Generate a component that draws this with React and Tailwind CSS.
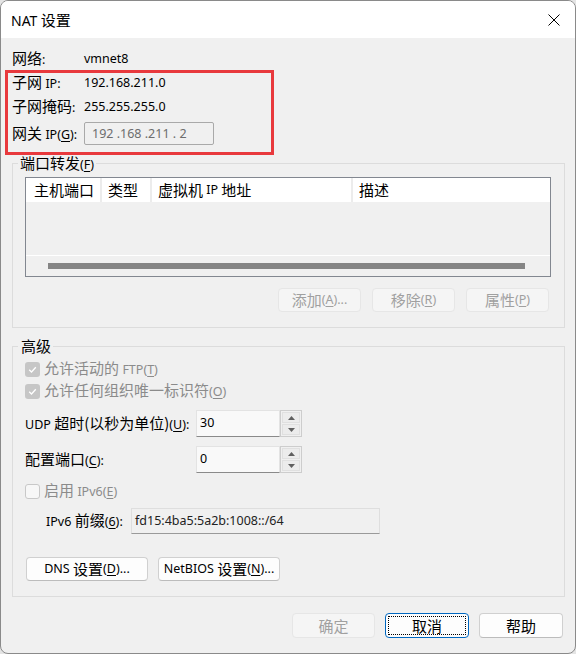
import React from "react";

function L({ children, className = "" }) {
  return (
    <span className={"font-['Noto_Sans',sans-serif] text-[12.5px] " + className}>
      {children}
    </span>
  );
}

function U({ children }) {
  return <span className="underline underline-offset-[2px] decoration-1">{children}</span>;
}

function Key({ k }) {
  return (
    <L>
      (<U>{k}</U>)
    </L>
  );
}

function Btn({ children, className = "", disabled = false, focused = false }) {
  if (focused) {
    return (
      <div className={"flex p-[2px] rounded-[4px] border border-[#0067c0] bg-[#fdfdfd] " + className}>
        <div className="flex-1 flex items-center justify-center border border-dotted border-black leading-[20px]">
          {children}
        </div>
      </div>
    );
  }
  return (
    <div
      className={
        "flex items-center justify-center rounded-[4px] border leading-[20px] " +
        (disabled
          ? "bg-[#f5f5f5] border-[#e6e6e6] text-[#a0a0a0] "
          : "bg-[#fdfdfd] border-[#d0d0d0] border-b-[#bcbcbc] text-black ") +
        className
      }
    >
      {children}
    </div>
  );
}

function CheckBox({ checked }) {
  if (checked) {
    return (
      <div className="w-[15px] h-[15px] rounded-[3px] bg-[#c6c6c6] flex items-center justify-center shrink-0">
        <svg width="11" height="11" viewBox="0 0 11 11">
          <path d="M2.2 5.8 L4.5 8 L8.8 3.2" fill="none" stroke="#ffffff" strokeWidth="1.3" />
        </svg>
      </div>
    );
  }
  return <div className="w-[15px] h-[15px] rounded-[3px] border border-[#c8c8c8] bg-[#f7f7f7] shrink-0" />;
}

function Spin({ value }) {
  return (
    <div className="flex h-[27px] w-[106px]">
      <div className="w-[84px] h-full bg-[#f9f9f9] border border-[#e3e3e3] border-b-[#8a8a8a] pl-[3px] pt-[1px] leading-[18px]">
        <L>{value}</L>
      </div>
      <div className="w-[22px] h-full border border-[#cdcdcd] bg-[#f0f0f0] p-[1px] flex flex-col gap-[1px]">
        <div className="flex-1 border border-[#e0e0e0] bg-[#ececec] flex items-center justify-center">
          <svg width="7" height="4" viewBox="0 0 7 4">
            <polygon points="0,4 3.5,0 7,4" fill="#606060" />
          </svg>
        </div>
        <div className="flex-1 border border-[#e0e0e0] bg-[#ececec] flex items-center justify-center">
          <svg width="7" height="4" viewBox="0 0 7 4">
            <polygon points="0,0 7,0 3.5,4" fill="#606060" />
          </svg>
        </div>
      </div>
    </div>
  );
}

export default function App() {
  return (
    <div className="w-[576px] h-[654px] bg-[#e4e4e4] font-['Noto_Sans_CJK_SC',sans-serif] text-[15px] text-black">
      <div className="w-full h-full flex flex-col rounded-[8px] border border-[#8a8a8a] overflow-hidden bg-[#f0f0f0]">
        {/* Title bar */}
        <div className="h-[37px] shrink-0 bg-white flex items-center justify-between pl-[10px] pr-[15px]">
          <div className="leading-[20px] mt-[1px]">
            <span className="font-['Noto_Sans',sans-serif] text-[14px]">NAT</span> 设置
          </div>
          <svg width="12" height="12" viewBox="0 0 12 12">
            <path d="M0.5 0.5 L11.5 11.5 M11.5 0.5 L0.5 11.5" stroke="#000" strokeWidth="1" />
          </svg>
        </div>

        {/* Body */}
        <div className="flex flex-col pl-[11px] pt-[11px]">
          <div className="h-[20px] flex items-center leading-[20px]">
            <div className="w-[72px]">
              网络<L>:</L>
            </div>
            <L>vmnet8</L>
          </div>

          <div className="mt-[1px] ml-[-7px] w-[269px] border-[3px] border-[#e8393d] pl-[4px] pb-[7px]">
            <div className="h-[19px] flex items-center leading-[20px]">
              <div className="w-[72px]">
                子网 <L>IP:</L>
              </div>
              <L>192.168.211.0</L>
            </div>
            <div className="mt-[5px] h-[20px] flex items-center leading-[20px]">
              <div className="w-[72px]">
                子网掩码<L>:</L>
              </div>
              <L>255.255.255.0</L>
            </div>
            <div className="mt-[5px] h-[23px] flex items-center leading-[20px]">
              <div className="w-[72px]">
                网关 <L>IP</L>
                <Key k="G" />
                <L>:</L>
              </div>
              <div className="w-[130px] h-[23px] border border-[#a9a9a9] rounded-[2px] bg-[#f0f0f0] pl-[7px] flex items-center">
                <L className="text-[#6d6d6d] whitespace-pre">192 .168 .211 . 2</L>
              </div>
            </div>
          </div>

          {/* Port forwarding */}
          <fieldset className="mt-[-2px] w-[553px] border border-[#dcdcdc] pl-[5px] pr-[8px] pb-[15px]">
            <legend className="px-[2px] h-[20px] leading-[20px]">
              端口转发<Key k="F" />
            </legend>
            <div className="pl-[7px] pr-[5px] flex flex-col">
              <div className="mt-[4px] h-[100px] border border-[#828790] bg-[#f0f0f0] flex flex-col">
                <div className="h-[24px] bg-white flex leading-[20px]">
                  <div className="w-[76px] pl-[8px] border-r-2 border-[#ececec] flex items-center">主机端口</div>
                  <div className="w-[50px] pl-[6px] border-r-2 border-[#ececec] flex items-center">类型</div>
                  <div className="w-[201px] pl-[6px] border-r-2 border-[#ececec] flex items-center">
                    虚拟机 <L>&nbsp;IP&nbsp;</L> 地址
                  </div>
                  <div className="flex-1 pl-[6px] flex items-center">描述</div>
                </div>
                <div className="h-[53px]" />
                <div className="h-[1px] bg-white" />
                <div className="h-[20px] pl-[22px] pr-[25px] pt-[7px]">
                  <div className="h-[6px] bg-[#858585]" />
                </div>
              </div>
              <div className="mt-[11px] flex justify-end gap-[11px] pr-[2px]">
                <Btn disabled className="w-[83px] h-[24px]">
                  添加<Key k="A" />
                  <L>...</L>
                </Btn>
                <Btn disabled className="w-[83px] h-[24px]">
                  移除<Key k="R" />
                </Btn>
                <Btn disabled className="w-[83px] h-[24px]">
                  属性<Key k="P" />
                </Btn>
              </div>
            </div>
          </fieldset>

          {/* Advanced */}
          <fieldset className="mt-[8px] w-[553px] border border-[#dcdcdc] pl-[5px] pr-[8px] pb-[15px]">
            <legend className="pl-[3px] pr-[2px] h-[20px] leading-[20px]">高级</legend>
            <div className="pl-[7px] flex flex-col">
              <div className="mt-[2px] h-[22px] flex items-center gap-[4px] leading-[20px] text-[#8b8b8b]">
                <CheckBox checked />
                <span>
                  允许活动的 <L>FTP</L>
                  <Key k="T" />
                </span>
              </div>
              <div className="h-[22px] flex items-center gap-[4px] leading-[20px] text-[#8b8b8b]">
                <CheckBox checked />
                <span>
                  允许任何组织唯一标识符<Key k="O" />
                </span>
              </div>
              <div className="mt-[8px] h-[27px] flex items-center leading-[20px]">
                <div className="w-[171px]">
                  <L>UDP</L> 超时(以秒为单位)<Key k="U" />
                  <L>:</L>
                </div>
                <Spin value="30" />
              </div>
              <div className="mt-[9px] h-[27px] flex items-center leading-[20px]">
                <div className="w-[171px]">
                  配置端口<Key k="C" />
                  <L>:</L>
                </div>
                <Spin value="0" />
              </div>
              <div className="mt-[7px] h-[22px] flex items-center gap-[4px] leading-[20px] text-[#8b8b8b]">
                <CheckBox checked={false} />
                <span>
                  启用 <L>IPv6</L>
                  <Key k="E" />
                </span>
              </div>
              <div className="mt-[6px] h-[26px] flex items-center pl-[21px] leading-[20px]">
                <div className="w-[85px]">
                  <L>IPv6</L> 前缀<Key k="6" />
                  <L>:</L>
                </div>
                <div className="w-[249px] h-[26px] bg-[#f0f0f0] border border-[#dedede] border-b-[#9a9a9a] pl-[3px] pt-[1px] leading-[18px]">
                  <L className="text-[#222]">fd15:4ba5:5a2b:1008::/64</L>
                </div>
              </div>
              <div className="mt-[23px] flex gap-[10px] pl-[1px]">
                <Btn className="w-[122px] h-[24px]">
                  <L>DNS</L>&nbsp;设置<Key k="D" />
                  <L>...</L>
                </Btn>
                <Btn className="w-[122px] h-[24px]">
                  <L>NetBIOS</L>&nbsp;设置<Key k="N" />
                  <L>...</L>
                </Btn>
              </div>
            </div>
          </fieldset>

          {/* Dialog buttons */}
          <div className="mt-[16px] flex justify-end gap-[10px] pr-[12px]">
            <Btn disabled className="w-[83px] h-[25px]">确定</Btn>
            <Btn focused className="w-[84px] h-[25px]">取消</Btn>
            <Btn className="w-[84px] h-[25px]">帮助</Btn>
          </div>
        </div>
      </div>
    </div>
  );
}
